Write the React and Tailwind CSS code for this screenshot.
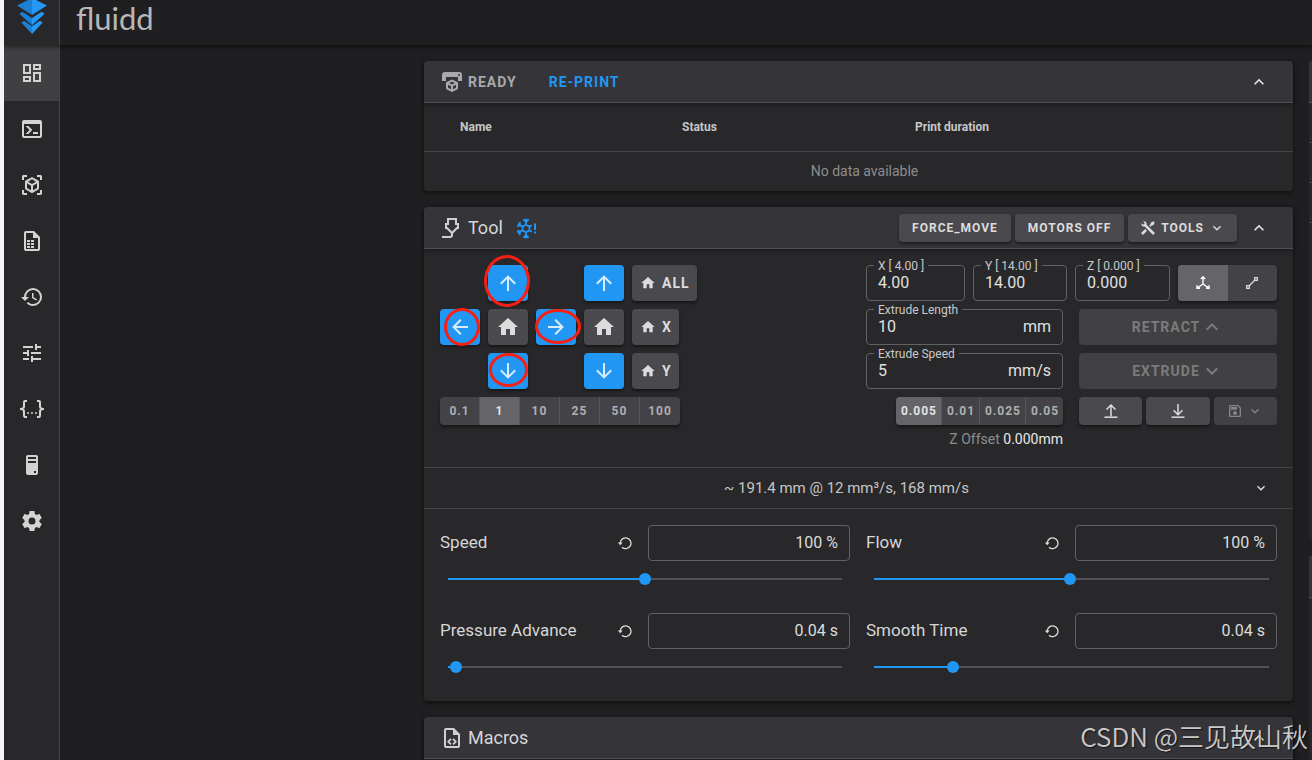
import React, { useState } from "react";

const PATHS = {
  dashboard:
    "M19,5V7H15V5H19M9,5V11H5V5H9M19,13V19H15V13H19M9,17V19H5V17H9M21,3H13V9H21V3M11,3H3V13H11V3M21,11H13V21H21V11M11,15H3V21H11V15Z",
  console:
    "M20,19V7H4V19H20M20,3A2,2 0 0,1 22,5V19A2,2 0 0,1 20,21H4A2,2 0 0,1 2,19V5C2,3.89 2.9,3 4,3H20M13,17V15H18V17H13M9.58,13L5.57,9H8.4L11.7,12.3C12.09,12.69 12.09,13.33 11.7,13.72L8.42,17H5.59L9.58,13Z",
  cubeScan:
    "M17,22V20H20V17H22V20.5C22,20.89 21.84,21.24 21.54,21.54C21.24,21.84 20.89,22 20.5,22H17M7,22H3.5C3.11,22 2.76,21.84 2.46,21.54C2.16,21.24 2,20.89 2,20.5V17H4V20H7V22M17,2H20.5C20.89,2 21.24,2.16 21.54,2.46C21.84,2.76 22,3.11 22,3.5V7H20V4H17V2M7,2V4H4V7H2V3.5C2,3.11 2.16,2.76 2.46,2.46C2.76,2.16 3.11,2 3.5,2H7M13,17.25L17,14.95V10.36L13,12.66V17.25M12,10.92L16,8.63L12,6.28L8,8.63L12,10.92M7,14.95L11,17.25V12.66L7,10.36V14.95M18.23,7.59C18.73,7.91 19,8.34 19,8.91V15.23C19,15.8 18.73,16.23 18.23,16.55L12.75,19.73C12.25,20.05 11.75,20.05 11.25,19.73L5.77,16.55C5.27,16.23 5,15.8 5,15.23V8.91C5,8.34 5.27,7.91 5.77,7.59L11.25,4.41C11.5,4.28 11.75,4.22 12,4.22C12.25,4.22 12.5,4.28 12.75,4.41L18.23,7.59Z",
  fileTable:
    "M14,2H6A2,2 0 0,0 4,4V20A2,2 0 0,0 6,22H18A2,2 0 0,0 20,20V8L14,2M18,20H6V4H13V9H18V20M7,11H10V13H7V11M11,11H14V13H11V11M7,14H10V16H7V14M11,14H14V16H11V14M7,17H10V19H7V17M11,17H14V19H11V17Z",
  history:
    "M13.5,8H12V13L16.28,15.54L17,14.33L13.5,12.25V8M13,3A9,9 0 0,0 4,12H1L4.96,16.03L9,12H6A7,7 0 0,1 13,5A7,7 0 0,1 20,12A7,7 0 0,1 13,19C11.07,19 9.32,18.21 8.06,16.94L6.64,18.36C8.27,20 10.5,21 13,21A9,9 0 0,0 22,12A9,9 0 0,0 13,3",
  tune: "M3,17V19H9V17H3M3,5V7H13V5H3M13,21V19H21V17H13V15H11V21H13M7,9V11H3V13H7V15H9V9H7M21,13V11H11V13H21M15,9H17V7H21V5H17V3H15V9Z",
  json: "M5,3H7V5H5V10A2,2 0 0,1 3,12A2,2 0 0,1 5,14V19H7V21H5C3.93,20.73 3,20.1 3,19V15A2,2 0 0,0 1,13H0V11H1A2,2 0 0,0 3,9V5A2,2 0 0,1 5,3M19,3A2,2 0 0,1 21,5V9A2,2 0 0,0 23,11H24V13H23A2,2 0 0,0 21,15V19A2,2 0 0,1 19,21H17V19H19V14A2,2 0 0,1 21,12A2,2 0 0,1 19,10V5H17V3H19M12,15A1,1 0 0,1 13,16A1,1 0 0,1 12,17A1,1 0 0,1 11,16A1,1 0 0,1 12,15M8,15A1,1 0 0,1 9,16A1,1 0 0,1 8,17A1,1 0 0,1 7,16A1,1 0 0,1 8,15M16,15A1,1 0 0,1 17,16A1,1 0 0,1 16,17A1,1 0 0,1 15,16A1,1 0 0,1 16,15Z",
  tower:
    "M8,2H16A2,2 0 0,1 18,4V20A2,2 0 0,1 16,22H8A2,2 0 0,1 6,20V4A2,2 0 0,1 8,2M8,4V6H16V4H8M16,8H8V10H16V8M16,18H14V20H16V18Z",
  cog: "M12,15.5A3.5,3.5 0 0,1 8.5,12A3.5,3.5 0 0,1 12,8.5A3.5,3.5 0 0,1 15.5,12A3.5,3.5 0 0,1 12,15.5M19.43,12.97C19.47,12.65 19.5,12.33 19.5,12C19.5,11.67 19.47,11.34 19.43,11L21.54,9.37C21.73,9.22 21.78,8.95 21.66,8.73L19.66,5.27C19.54,5.05 19.27,4.96 19.05,5.05L16.56,6.05C16.04,5.66 15.5,5.32 14.87,5.07L14.5,2.42C14.46,2.18 14.25,2 14,2H10C9.75,2 9.54,2.18 9.5,2.42L9.13,5.07C8.5,5.32 7.96,5.66 7.44,6.05L4.95,5.05C4.73,4.96 4.46,5.05 4.34,5.27L2.34,8.73C2.21,8.95 2.27,9.22 2.46,9.37L4.57,11C4.53,11.34 4.5,11.67 4.5,12C4.5,12.33 4.53,12.65 4.57,12.97L2.46,14.63C2.27,14.78 2.21,15.05 2.34,15.27L4.34,18.73C4.46,18.95 4.73,19.03 4.95,18.95L7.44,17.94C7.96,18.34 8.5,18.68 9.13,18.93L9.5,21.58C9.54,21.82 9.75,22 10,22H14C14.25,22 14.46,21.82 14.5,21.58L14.87,18.93C15.5,18.67 16.04,18.34 16.56,17.94L19.05,18.95C19.27,19.03 19.54,18.95 19.66,18.73L21.66,15.27C21.78,15.05 21.73,14.78 21.54,14.63L19.43,12.97Z",
  printer:
    "M19,6A1,1 0 0,0 20,5A1,1 0 0,0 19,4A1,1 0 0,0 18,5A1,1 0 0,0 19,6M19,2A3,3 0 0,1 22,5V11H18V7H6V11H2V5A3,3 0 0,1 5,2H19M18,18.25C18,18.63 17.79,18.96 17.47,19.13L12.57,21.82C12.4,21.94 12.21,22 12,22C11.79,22 11.59,21.94 11.43,21.82L6.53,19.13C6.21,18.96 6,18.63 6,18.25V13C6,12.62 6.21,12.29 6.53,12.12L11.43,9.68C11.59,9.56 11.79,9.5 12,9.5C12.21,9.5 12.4,9.56 12.57,9.68L17.47,12.12C17.79,12.29 18,12.62 18,13V18.25M12,11.65L9.04,13L12,14.6L14.96,13L12,11.65M8,17.66L11,19.29V16.33L8,14.71V17.66M16,17.66V14.71L13,16.33V19.29L16,17.66Z",
  nozzle:
    "M7,2H17V7H19V13H17.5L13,17.5V19A3,3 0 0,1 10,22H2V20H10A1,1 0 0,0 11,19V17.5L6.5,13H5V7H7V2M9,4V9H7V11H7.5L12,15.5L16.5,11H17V9H15V4H9Z",
  tools:
    "M21.71 20.29L20.29 21.71A1 1 0 0 1 18.88 21.71L7 9.85A3.81 3.81 0 0 1 6 10A4 4 0 0 1 2.22 4.7L4.76 7.24L5.29 6.71L6.71 5.29L7.24 4.76L4.7 2.22A4 4 0 0 1 10 6A3.81 3.81 0 0 1 9.85 7L21.71 18.88A1 1 0 0 1 21.71 20.29M2.29 18.88A1 1 0 0 0 2.29 20.29L3.71 21.71A1 1 0 0 0 5.12 21.71L10.59 16.25L7.76 13.42M20 2L16 4V6L13.83 8.17L15.83 10.17L18 8H20L22 4Z",
  home: "M10,20V14H14V20H19V12H22L12,3L2,12H5V20H10Z",
  arrow: "M13,20H11V8L5.5,13.5L4.08,12.08L12,4.16L19.92,12.08L18.5,13.5L13,8V20Z",
  chevronUp: "M7.41,15.41L12,10.83L16.59,15.41L18,14L12,8L6,14L7.41,15.41Z",
  chevronDown: "M7.41,8.58L12,13.17L16.59,8.58L18,10L12,16L6,10L7.41,8.58Z",
  save: "M17 3H5C3.89 3 3 3.9 3 5V19C3 20.1 3.89 21 5 21H19C20.1 21 21 20.1 21 19V7L17 3M19 19H5V5H16.17L19 7.83V19M12 12C10.34 12 9 13.34 9 15S10.34 18 12 18 15 16.66 15 15 13.66 12 12 12M6 6H15V10H6V6Z",
  fileCode:
    "M14,2H6A2,2 0 0,0 4,4V20A2,2 0 0,0 6,22H18A2,2 0 0,0 20,20V8L14,2M18,20H6V4H13V9H18V20M9.54,15.65L11.63,17.74L10.35,19L7,15.65L10.35,12.3L11.63,13.56L9.54,15.65M17,15.65L13.65,19L12.38,17.74L14.47,15.65L12.38,13.56L13.65,12.3L17,15.65Z",
};

function Icon({ name, className = "size-6" }) {
  return (
    <svg viewBox="0 0 24 24" className={`shrink-0 fill-current ${className}`} aria-hidden="true">
      <path d={PATHS[name]} />
    </svg>
  );
}

function Logo() {
  return (
    <svg viewBox="0 0 30 36" className="h-9 w-[30px]" aria-hidden="true">
      <path fill="#1b7fd4" d="M15 0V17L0 7.500Z M2.300 15.700L5.500 13.700L15 20V27.300Z M4.300 24.500L7 22.700L15 28.300V36Z" />
      <path fill="#2398f5" d="M15 0V17L30 7.500Z M27.700 15.700L24.500 13.700L15 20V27.300Z M25.700 24.500L23 22.700L15 28.300V36Z" />
    </svg>
  );
}

function SnowflakeAlert() {
  return (
    <svg viewBox="0 0 24 24" className="size-6 text-[#2196f3]" fill="none" stroke="currentColor" strokeWidth="1.8" aria-hidden="true">
      <path d="M11 8.800L14.500 10.600V14.400L11 16.200L7.500 14.400V10.600Z M11 8.800V2.500 M11 16.200V22.500 M8.300 3.300L11 6L13.700 3.300 M8.300 21.700L11 19L13.700 21.700 M7.500 10.600L2.800 8 M7.500 14.400L2.800 17 M4.500 6L5.200 9.400L2 10.300 M4.500 19L5.200 15.600L2 14.700 M14.500 10.600L16.800 9.300 M14.500 14.400L16.800 15.700" />
      <path strokeWidth="2" d="M20 7.500V14 M20 15.500V17.500" />
    </svg>
  );
}

function AxisIcon() {
  return (
    <svg viewBox="0 0 16 16" className="size-4" fill="none" stroke="currentColor" strokeWidth="1.400" aria-hidden="true">
      <path d="M8 9V2.500 M8 9L2.500 12.800 M8 9L13.500 12.800 M5.800 4L8 1.800L10.200 4 M2 10.200V13.200H5 M14 10.200V13.200H11" />
    </svg>
  );
}

function VectorIcon() {
  return (
    <svg viewBox="0 0 16 16" className="size-4" fill="none" stroke="currentColor" strokeWidth="1.300" aria-hidden="true">
      <path d="M2.700 10.700H5.300V13.300H2.700Z M10.700 2.700H13.300V5.300H10.700Z M5.300 10.700L10.700 5.300" />
    </svg>
  );
}

function BarArrow({ down }) {
  return (
    <svg viewBox="0 0 18 18" className="size-[18px]" fill="none" stroke="currentColor" strokeWidth="1.500" aria-hidden="true">
      <path d="M2.500 15.200H15.500" />
      <path d={down ? "M9 2V12.500 M4.500 8.200L9 12.700L13.500 8.200" : "M9 14.500V3.200 M4.500 7.500L9 3L13.500 7.500"} />
    </svg>
  );
}

function ResetIcon() {
  return (
    <svg viewBox="0 0 16 16" className="size-4" aria-hidden="true">
      <path d="M3.200 8A5.400 5.400 0 1 1 4.900 12.200" fill="none" stroke="currentColor" strokeWidth="1.300" />
      <path d="M0.800 7.500H5.600L3.200 10.200Z" fill="currentColor" />
    </svg>
  );
}

/* Hand-drawn style ring laid over a jog button */
function Ring({ className }) {
  return <span className={`pointer-events-none absolute rounded-[50%] border-[3px] border-[#f81f12] ${className}`} />;
}

const NAV = [
  ["dashboard", "Dashboard"],
  ["console", "Console"],
  ["cubeScan", "Preview"],
  ["fileTable", "Jobs"],
  ["history", "History"],
  ["tune", "Tune"],
  ["json", "Configuration"],
  ["tower", "System"],
  ["cog", "Settings"],
];

const cardClass = "rounded bg-[#28282a] shadow-[0_2px_4px_rgba(0,0,0,0.5)]";
const headClass =
  "flex h-[42px] items-center rounded-t border-b border-[#515056] bg-[#353439] shadow-[0_2px_4px_rgba(0,0,0,0.35)]";
const raised = "rounded bg-[#4a494e] text-[#dcdcdd] shadow-[0_2px_3px_rgba(0,0,0,0.45)]";
const smallText = "text-xs font-bold tracking-[1px]";

function Collapse({ label }) {
  return (
    <button aria-label={label} className="flex size-9 items-center justify-center text-[#e4e4e4]">
      <Icon name="chevronUp" className="size-5" />
    </button>
  );
}

function Jog({ label, turn = "", className = "", children }) {
  return (
    <div className={`relative ${className}`}>
      <button
        aria-label={label}
        className="flex h-9 w-10 items-center justify-center rounded bg-[#2196f3] text-[#d8ecfd] shadow-[0_2px_3px_rgba(0,0,0,0.4)]"
      >
        <Icon name="arrow" className={`size-6 ${turn}`} />
      </button>
      {children}
    </div>
  );
}

function HomeIconButton({ label }) {
  return (
    <button aria-label={label} className={`flex h-9 w-10 items-center justify-center ${raised}`}>
      <Icon name="home" />
    </button>
  );
}

function HomeAxis({ axis }) {
  return (
    <button className={`flex h-9 items-center gap-[6px] justify-self-start pr-[7px] pl-2 text-sm font-bold tracking-[1px] ${raised}`}>
      <Icon name="home" className="size-4" />
      {axis}
    </button>
  );
}

function Field({ id, label, value, unit, className = "" }) {
  return (
    <div className={`relative flex h-9 min-w-0 items-center rounded border border-[#616163] px-[11px] text-base text-[#e0e0e0] ${className}`}>
      <label htmlFor={id} className="absolute -top-2 left-[7px] bg-[#28282a] px-1 text-xs leading-4 whitespace-nowrap text-[#c9c9ca]">
        {label}
      </label>
      <input id={id} defaultValue={value} className="w-full min-w-0 bg-transparent outline-none" />
      {unit && <span>{unit}</span>}
    </div>
  );
}

function Segments({ items, active, className = "", itemClass = "" }) {
  const [current, setCurrent] = useState(active);
  return (
    <div className={`flex h-7 overflow-hidden rounded bg-[#434246] shadow-[0_2px_3px_rgba(0,0,0,0.45)] ${className}`}>
      {items.map((v) => (
        <button
          key={v}
          onClick={() => setCurrent(v)}
          className={`border-r border-[#57565a] last:border-r-0 ${smallText} ${itemClass} ${
            v === current ? "bg-[#656469] text-[#e2e2e3]" : "text-[#afafb1]"
          }`}
        >
          {v}
        </button>
      ))}
    </div>
  );
}

function SliderControl({ id, label, value, start }) {
  const [pos, setPos] = useState(start);
  return (
    <div className="flex min-w-0 flex-col">
      <div className="flex h-9 items-center">
        <label htmlFor={id} className="flex-1 text-[17px] whitespace-nowrap text-[#d6d6d7]">
          {label}
        </label>
        <button aria-label={`Reset ${label}`} className="mr-[15px] text-[#dedede]">
          <ResetIcon />
        </button>
        <input
          id={id}
          defaultValue={value}
          className="h-9 w-[202px] min-w-0 rounded border border-[#616163] bg-transparent px-[11px] pb-[2px] text-right text-base text-[#dcdcdc] outline-none"
        />
      </div>
      <div className="relative mx-2 mt-[11px] flex h-[14px] items-center">
        <div className="h-[2px] w-full bg-[#525254]">
          <div className="h-full bg-[#2196f3]" style={{ width: `${pos}%` }} />
        </div>
        <input
          type="range"
          aria-label={`${label} slider`}
          min="0"
          max="100"
          step="0.5"
          value={pos}
          onChange={(e) => setPos(Number(e.target.value))}
          className="absolute -right-[6px] -left-[6px] h-[14px] appearance-none bg-transparent [&::-webkit-slider-thumb]:size-3 [&::-webkit-slider-thumb]:appearance-none [&::-webkit-slider-thumb]:rounded-full [&::-webkit-slider-thumb]:bg-[#2196f3]"
        />
      </div>
    </div>
  );
}

export default function App() {
  return (
    <div className="flex h-screen flex-col overflow-hidden border-l-4 border-[#f4f5f7] bg-[#1f1f21] font-['Roboto','Noto_Sans_CJK_SC',sans-serif] text-[#d0d0d0]">
      <header className="relative z-10 flex h-[45px] shrink-0 bg-[#1f1f21] shadow-[0_2px_4px_rgba(0,0,0,0.5)]">
        <a href="#home" aria-label="Home" className="flex w-14 shrink-0 justify-center border-r border-[#464648] bg-[#28282a]">
          <div className="-mt-[2px]">
            <Logo />
          </div>
        </a>
        <h1 className="px-4 font-['Lato',sans-serif] text-[31px] leading-9 font-normal text-[#b8b8b8]">fluidd</h1>
      </header>

      <div className="flex min-h-0 flex-1">
        <nav className="flex w-14 shrink-0 flex-col border-r border-[#464648] bg-[#28282a] text-[#d3d3d3]">
          {NAV.map(([icon, label], i) => (
            <a
              key={icon}
              href={`#${icon}`}
              aria-label={label}
              className={`flex h-14 items-center justify-center ${i === 0 ? "bg-[#404042]" : ""}`}
            >
              <Icon name={icon} />
            </a>
          ))}
        </nav>

        <main className="flex min-w-0 flex-1 pt-4 pl-[364px]">
          <div className="flex min-w-0 flex-1 flex-col gap-4">
            <section className={cardClass}>
              <div className={`${headClass} pr-4 pl-4`}>
                <span className="flex items-center gap-1 text-sm font-bold tracking-[1px] text-[#a9a9ab]">
                  <Icon name="printer" />
                  READY
                </span>
                <button className="ml-8 text-sm font-bold tracking-[1px] text-[#2196f3]">RE-PRINT</button>
                <span className="flex-1" />
                <Collapse label="Collapse status" />
              </div>
              <table className="w-full table-fixed border-collapse">
                <thead>
                  <tr className="h-12 border-b border-[#444446] text-left text-xs text-[#c6c6c7]">
                    <th className="w-[242px] pl-9">Name</th>
                    <th className="w-[233px] pl-4">Status</th>
                    <th className="pl-4">Print duration</th>
                  </tr>
                </thead>
                <tbody>
                  <tr>
                    <td colSpan={3} className="h-10 pl-3 text-center text-sm text-[#8d8d8f]">
                      No data available
                    </td>
                  </tr>
                </tbody>
              </table>
            </section>

            <section className={cardClass}>
              <div className={`${headClass} pr-4 pl-4`}>
                <Icon name="nozzle" />
                <h2 className="ml-1 text-lg font-normal text-[#d6d6d7]">Tool</h2>
                <span className="ml-3">
                  <SnowflakeAlert />
                </span>
                <span className="flex-1" />
                <div className="flex gap-1">
                  <button className={`h-7 px-[13px] ${smallText} ${raised}`}>FORCE_MOVE</button>
                  <button className={`h-7 px-[13px] ${smallText} ${raised}`}>MOTORS OFF</button>
                  <button className={`flex h-7 items-center gap-[5px] px-3 ${smallText} ${raised}`}>
                    <Icon name="tools" className="size-4" />
                    TOOLS
                    <Icon name="chevronDown" className="size-4" />
                  </button>
                </div>
                <span className="ml-1">
                  <Collapse label="Collapse tool" />
                </span>
              </div>

              <div className="flex h-[218px] gap-4 p-4">
                <div className="flex min-w-0 flex-1 flex-col items-start gap-2">
                  <div className="grid grid-cols-[repeat(4,40px)_auto] gap-2">
                    <Jog label="Y plus" className="col-start-2">
                      <Ring className="-top-[10px] -left-[4px] h-[52px] w-[46px]" />
                    </Jog>
                    <Jog label="Z plus" className="col-start-4" />
                    <HomeAxis axis="ALL" />
                    <Jog label="X minus" turn="-rotate-90" className="col-start-1">
                      <Ring className="-top-[1px] left-[4px] h-[38px] w-[36px]" />
                    </Jog>
                    <HomeIconButton label="Home X and Y" />
                    <Jog label="X plus" turn="rotate-90">
                      <Ring className="top-0 -left-[1px] h-[35px] w-[46px]" />
                    </Jog>
                    <HomeIconButton label="Home Z" />
                    <HomeAxis axis="X" />
                    <Jog label="Y minus" turn="rotate-180" className="col-start-2">
                      <Ring className="top-0 left-[1px] h-[34px] w-[39px]" />
                    </Jog>
                    <Jog label="Z minus" turn="rotate-180" className="col-start-4" />
                    <HomeAxis axis="Y" />
                  </div>
                  <Segments items={["0.1", "1", "10", "25", "50", "100"]} active="1" itemClass="w-10" />
                </div>

                <div className="flex w-[411px] shrink-0 flex-col gap-2">
                  <div className="grid grid-cols-[99fr_94fr_95fr_99fr] gap-2">
                    <Field id="pos-x" label="X [ 4.00 ]" value="4.00" />
                    <Field id="pos-y" label="Y [ 14.00 ]" value="14.00" />
                    <Field id="pos-z" label="Z [ 0.000 ]" value="0.000" />
                    <div className="grid grid-cols-2 overflow-hidden rounded bg-[#434246] shadow-[0_2px_3px_rgba(0,0,0,0.45)]">
                      <button aria-label="Absolute positioning" className="flex items-center justify-center bg-[#656469] text-white">
                        <AxisIcon />
                      </button>
                      <button aria-label="Relative positioning" className="flex items-center justify-center text-[#dcdcdc]">
                        <VectorIcon />
                      </button>
                    </div>
                  </div>
                  <div className="flex gap-4">
                    <div className="flex min-w-0 flex-1 flex-col gap-2">
                      <Field id="ex-length" label="Extrude Length" value="10" unit="mm" />
                      <Field id="ex-speed" label="Extrude Speed" value="5" unit="mm/s" />
                      <Segments
                        items={["0.005", "0.01", "0.025", "0.05"]}
                        active="0.005"
                        className="w-[167px] self-end"
                        itemClass="flex-auto pl-1 pr-[3px]"
                      />
                      <p className="-mt-1 text-right text-sm leading-5 text-[#8d8d8f]">
                        Z Offset <span className="text-[#e8e8e8]">0.000mm</span>
                      </p>
                    </div>
                    <div className="flex w-[198px] flex-col gap-2">
                      {[
                        ["RETRACT", "chevronUp"],
                        ["EXTRUDE", "chevronDown"],
                      ].map(([label, icon]) => (
                        <button
                          key={label}
                          disabled
                          className="flex h-9 items-center justify-center rounded bg-[#414143] text-sm font-bold tracking-[1px] text-[#7b7b7d]"
                        >
                          {label}
                          <Icon name={icon} />
                        </button>
                      ))}
                      <div className="grid grid-cols-3 gap-1">
                        <button aria-label="Raise Z offset" className={`flex h-7 items-center justify-center ${raised}`}>
                          <BarArrow />
                        </button>
                        <button aria-label="Lower Z offset" className={`flex h-7 items-center justify-center ${raised}`}>
                          <BarArrow down />
                        </button>
                        <button
                          disabled
                          aria-label="Save Z offset"
                          className="flex h-7 items-center justify-center gap-1 rounded bg-[#414143] text-[#858587]"
                        >
                          <Icon name="save" className="size-4" />
                          <Icon name="chevronDown" className="size-4" />
                        </button>
                      </div>
                    </div>
                  </div>
                </div>
              </div>

              <button className="flex h-[42px] w-full items-center border-y border-[#444446] pr-6 pl-4 text-[15px] text-[#c6c6c7]">
                <span className="flex-1 text-center">~ 191.4 mm @ 12 mm³/s, 168 mm/s</span>
                <Icon name="chevronDown" className="size-4 text-[#e4e4e4]" />
              </button>

              <div className="grid grid-cols-[410fr_411fr] gap-x-4 gap-y-[27px] px-4 pt-4 pb-[27px]">
                <SliderControl id="speed" label="Speed" value="100 %" start={50} />
                <SliderControl id="flow" label="Flow" value="100 %" start={49.5} />
                <SliderControl id="pa" label="Pressure Advance" value="0.04 s" start={2} />
                <SliderControl id="smooth" label="Smooth Time" value="0.04 s" start={20} />
              </div>
            </section>

            <section className={`h-[60px] shrink-0 ${cardClass}`}>
              <div className={`${headClass} pr-4 pl-4`}>
                <Icon name="fileCode" />
                <h2 className="ml-1 flex-1 text-lg font-normal text-[#d6d6d7]">Macros</h2>
                <Collapse label="Collapse macros" />
              </div>
            </section>
          </div>

          <div className="ml-4 flex w-[3px] shrink-0 flex-col gap-4">
            <div className="flex h-[479px] shrink-0 flex-col rounded-l bg-[#28282a]">
              <div className="h-[42px] rounded-tl border-b border-[#515056] bg-[#353439]" />
              <div className="h-10 border-b border-[#444446]" />
              <div className="h-10 border-b border-[#444446]" />
              <div className="h-10 border-b border-[#444446]" />
            </div>
            <div className="flex-1 rounded-tl bg-[#28282a]">
              <div className="h-[42px] rounded-tl border-b border-[#515056] bg-[#353439]" />
            </div>
          </div>
        </main>
      </div>

      <p className="pointer-events-none absolute right-1 bottom-1.5 z-20 font-['Noto_Sans_CJK_SC',sans-serif] text-[26px] leading-9 font-[350] text-[#c9c9ca] [text-shadow:1px_1px_1px_rgba(0,0,0,0.6)]">
        CSDN @三见故山秋
      </p>
    </div>
  );
}
